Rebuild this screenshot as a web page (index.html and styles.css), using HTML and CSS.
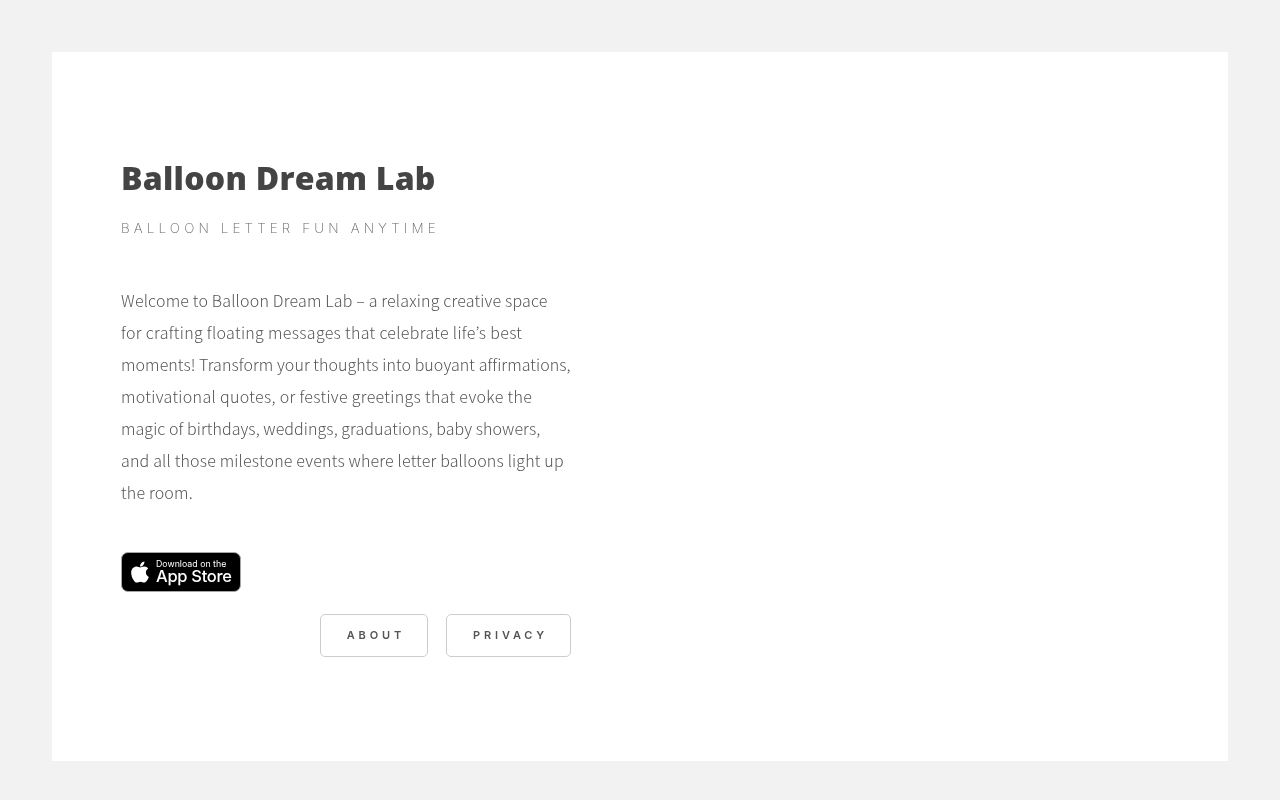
FILE: index.html
```html
<!DOCTYPE html>
<html lang="en">
    <head>
        <meta charset="UTF-8" />
        <meta name="viewport" content="width=device-width, initial-scale=1.0" />
        <title>Balloon Dream Lab</title>
        <link rel="stylesheet" href="styles.css" />
    </head>

    <body>
        <main class="card">
            <section class="intro">
                <h1 class="title">Balloon Dream Lab</h1>
                <p class="tagline">Balloon letter fun anytime</p>
                <p class="description">
                    <span class="line">Welcome to Balloon Dream Lab – a relaxing creative space</span>
                    <span class="line line-wide">for crafting floating messages that celebrate life’s best</span>
                    <span class="line line-tight">moments! Transform your thoughts into buoyant affirmations,</span>
                    <span class="line line-wide">motivational quotes, or festive greetings that evoke the</span>
                    <span class="line line-tight">magic of birthdays, weddings, graduations, baby showers,</span>
                    <span class="line">and all those milestone events where letter balloons light up</span>
                    <span class="line">the room.</span>
                </p>
                <a class="store-badge" href="#">
                    <svg class="apple-logo" viewBox="0 0 384 512" width="20" height="24" aria-hidden="true">
                        <path fill="#fff" d="M318.7 268.7c-.2-36.7 16.4-64.4 50-84.8-18.8-26.9-47.2-41.7-84.7-44.6-35.5-2.8-74.3 20.7-88.5 20.7-15 0-49.4-19.7-76.4-19.7C63.3 141.2 4 184.8 4 273.5q0 39.3 14.4 81.2c12.8 36.7 59 126.7 107.2 125.2 25.2-.6 43-17.9 75.8-17.9 31.8 0 48.3 17.9 76.4 17.9 48.6-.7 90.4-82.5 102.6-119.3-65.2-30.7-61.7-90-61.7-91.9zm-56.6-164.2c27.3-32.4 24.8-61.9 24-72.5-24.1 1.4-52 16.4-67.9 34.9-17.5 19.8-27.8 44.3-25.6 71.9 26.1 2 49.9-11.4 69.5-34.3z" />
                    </svg>
                    <span class="store-text">
                        <span class="store-small">Download on the</span>
                        <span class="store-large">App Store</span>
                    </span>
                </a>
                <nav class="links">
                    <a class="link-button" href="#">About</a>
                    <a class="link-button" href="#">Privacy</a>
                </nav>
            </section>
        </main>
    </body>
</html>
```

FILE: styles.css
```css
* {
    box-sizing: border-box;
}

body {
    margin: 0;
    height: 800px;
    padding: 52px 52px 39px;
    background-color: #f2f2f2;
    overflow: hidden;
}

.card {
    height: 709px;
    padding: 100px 69px 0;
    background-color: #fff;
}

.intro {
    width: 450px;
    will-change: transform;
}

.title {
    margin: 0;
    font-family: "Open Sans", sans-serif;
    font-size: 32px;
    font-weight: 800;
    line-height: 52px;
    letter-spacing: 0.25px;
    color: #444;
}

.tagline {
    margin: 14px 0 0;
    font-family: "Inter", sans-serif;
    font-size: 13.5px;
    font-weight: 200;
    line-height: 20px;
    letter-spacing: 4.12px;
    text-transform: uppercase;
    color: #666;
}

.description {
    margin: 46px 0 0;
    font-family: "Noto Sans CJK JP", "Noto Sans", sans-serif;
    font-size: 16px;
    font-weight: 300;
    line-height: 32px;
    letter-spacing: 0.18px;
    white-space: nowrap;
    color: #555;
}

.line {
    display: block;
}

.line-wide {
    letter-spacing: 0.32px;
}

.line-tight {
    letter-spacing: 0.07px;
}

.store-badge {
    display: flex;
    align-items: center;
    gap: 6px;
    width: 120px;
    height: 40px;
    margin-top: 44px;
    padding-left: 8px;
    border: 1px solid #a6a6a6;
    border-radius: 7px;
    background-color: #000;
    color: #fff;
    text-decoration: none;
}

.apple-logo {
    flex: none;
}

.store-text {
    display: flex;
    flex-direction: column;
    font-family: "Inter", sans-serif;
}

.store-small {
    font-size: 8.8px;
    line-height: 9px;
}

.store-large {
    font-size: 16.5px;
    font-weight: 450;
    line-height: 17px;
    letter-spacing: -0.3px;
}

.links {
    display: flex;
    justify-content: flex-end;
    gap: 18px;
    margin-top: 22px;
}

.link-button {
    padding: 0 22px 0 26px;
    height: 43px;
    border: 1px solid #ccc;
    border-radius: 5px;
    font-family: "Inter", sans-serif;
    font-size: 11px;
    font-weight: 600;
    line-height: 41px;
    letter-spacing: 3.85px;
    text-transform: uppercase;
    text-decoration: none;
    color: #555;
}
```
